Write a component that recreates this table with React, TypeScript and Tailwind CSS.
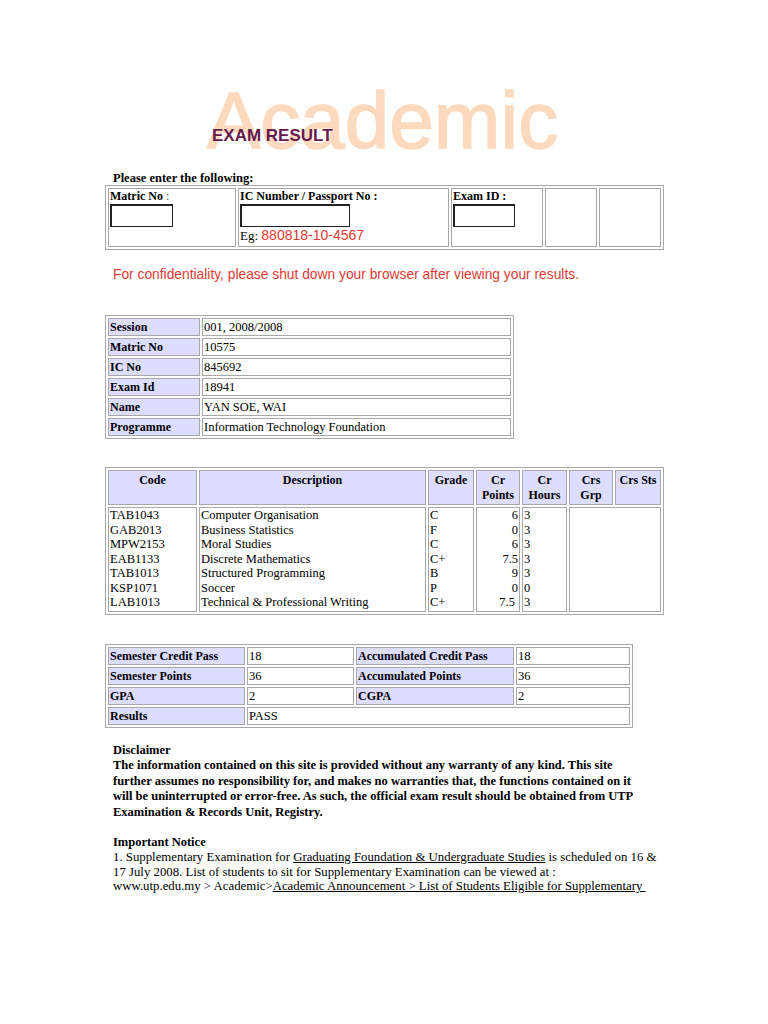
import React from "react";

const serif = "font-['Liberation_Serif','Times_New_Roman',serif]";
const sans = "font-['Liberation_Sans',Arial,sans-serif]";

// classic border=1 html table look
const table = "border-separate border-spacing-[2px] border border-[#a8a8a8] table-fixed";
const cell = "border border-[#a8a8a8] p-0 px-[1px]";
const label = `${cell} bg-[#ddddff] text-[12px] font-bold leading-[16px] h-[18px] align-middle`;
const value = `${cell} text-[12.5px] leading-[16px] h-[18px] align-middle`;

const info: [string, string][] = [
  ["Session", "001, 2008/2008"],
  ["Matric No", "10575"],
  ["IC No", "845692"],
  ["Exam Id", "18941"],
  ["Name", "YAN SOE, WAI"],
  ["Programme", "Information Technology Foundation"],
];

const courses = [
  { code: "TAB1043", desc: "Computer Organisation", grade: "C", pts: "6", hrs: "3" },
  { code: "GAB2013", desc: "Business Statistics", grade: "F", pts: "0", hrs: "3" },
  { code: "MPW2153", desc: "Moral Studies", grade: "C", pts: "6", hrs: "3" },
  { code: "EAB1133", desc: "Discrete Mathematics", grade: "C+", pts: "7.5", hrs: "3" },
  { code: "TAB1013", desc: "Structured Programming", grade: "B", pts: "9", hrs: "3" },
  { code: "KSP1071", desc: "Soccer", grade: "P", pts: "0", hrs: "0" },
  { code: "LAB1013", desc: "Technical & Professional Writing", grade: "C+", pts: "7.5\u00a0", hrs: "3" },
];

function Lines({ items }: { items: string[] }) {
  return (
    <>
      {items.map((t, i) => (
        <div key={i} className="whitespace-pre">
          {t}
        </div>
      ))}
    </>
  );
}

function Input({ w }: { w: string }) {
  return (
    <input
      type="text"
      aria-label="field"
      className={`block ${w} h-[23px] border border-[#222] border-t-2 border-l-2 bg-white outline-none`}
    />
  );
}

export default function App() {
  const head = `${cell} bg-[#ddddff] text-[12px] font-bold leading-[15px] text-center align-top pt-[2px] pb-[1px]`;
  const body = `${cell} text-[12.5px] leading-[14.5px] align-top pb-[1px]`;

  return (
    <div className={`min-h-[1024px] bg-white pl-[105px] pt-[81px] text-black ${serif}`}>
      {/* titre : filigrane + libellé */}
      <div className="relative h-[80px]">
        <div
          className={`ml-[102px] text-[80px] leading-[80px] text-[#fdd9bd] [-webkit-text-stroke:1.5px_#fdd9bd] ${sans}`}
        >
          Academic
        </div>
        <div className={`absolute left-[107px] top-[46px] text-[17px] font-bold leading-[17px] text-[#661a4d] ${sans}`}>
          EXAM RESULT
        </div>
      </div>

      <div className="ml-[8px] mt-[10px] text-[12.5px] font-bold leading-[14px]">Please enter the following:</div>

      <table className={`${table} w-[559px]`}>
        <tbody>
          <tr className="align-top">
            <td className={`${cell} w-[128px] text-[12px] leading-[15px] align-top`}>
              <b>Matric No</b> <span className="text-[#555]">:</span>
              <Input w="w-[63px]" />
            </td>
            <td className={`${cell} w-[211px] text-[12px] leading-[15px] align-top`}>
              <b>IC Number / Passport No :</b>
              <Input w="w-[110px]" />
              <div className="pb-[2px] text-[13px] leading-[16px]">
                Eg: <span className={`text-[14px] text-[#e23a34] ${sans}`}>880818-10-4567</span>
              </div>
            </td>
            <td className={`${cell} w-[92px] text-[12px] leading-[15px] align-top`}>
              <b>Exam ID :</b>
              <Input w="w-[62px]" />
            </td>
            <td className={`${cell} w-[52px]`} />
            <td className={`${cell} w-[62px]`} />
          </tr>
        </tbody>
      </table>

      <p className={`ml-[8px] mt-[17px] text-[13.8px] leading-[16px] text-[#e23a34] ${sans}`}>
        For confidentiality, please shut down your browser after viewing your results.
      </p>

      <table className={`${table} mt-[32px] w-[409px]`}>
        <tbody>
          {info.map(([k, v], i) => (
            <tr key={k}>
              <td className={`${label} ${i === 0 ? "w-[92px]" : ""}`}>{k}</td>
              <td className={`${value} ${i === 0 ? "w-[309px]" : ""}`}>{v}</td>
            </tr>
          ))}
        </tbody>
      </table>

      <table className={`${table} mt-[28px] w-[559px]`}>
        <tbody>
          <tr>
            <td className={`${head} w-[89px]`}>Code</td>
            <td className={`${head} w-[227px]`}>Description</td>
            <td className={`${head} w-[46px]`}>Grade</td>
            <td className={`${head} w-[44px]`}>
              Cr
              <br />
              Points
            </td>
            <td className={`${head} w-[45px]`}>
              Cr
              <br />
              Hours
            </td>
            <td className={`${head} w-[44px]`}>
              Crs
              <br />
              Grp
            </td>
            <td className={`${head} w-[46px]`}>Crs Sts</td>
          </tr>
          <tr>
            <td className={body}>
              <Lines items={courses.map((c) => c.code)} />
            </td>
            <td className={body}>
              <Lines items={courses.map((c) => c.desc)} />
            </td>
            <td className={body}>
              <Lines items={courses.map((c) => c.grade)} />
            </td>
            <td className={`${body} text-right`}>
              <Lines items={courses.map((c) => c.pts)} />
            </td>
            <td className={body}>
              <Lines items={courses.map((c) => c.hrs)} />
            </td>
            <td className={body} colSpan={2} />
          </tr>
        </tbody>
      </table>

      <table className={`${table} mt-[29px] w-[528px]`}>
        <tbody>
          <tr>
            <td className={`${label} w-[137px]`}>Semester Credit Pass</td>
            <td className={`${value} w-[107px]`}>18</td>
            <td className={`${label} w-[158px]`}>Accumulated Credit Pass</td>
            <td className={`${value} w-[114px]`}>18</td>
          </tr>
          <tr>
            <td className={label}>Semester Points</td>
            <td className={value}>36</td>
            <td className={label}>Accumulated Points</td>
            <td className={value}>36</td>
          </tr>
          <tr>
            <td className={label}>GPA</td>
            <td className={value}>2</td>
            <td className={label}>CGPA</td>
            <td className={value}>2</td>
          </tr>
          <tr>
            <td className={label}>Results</td>
            <td className={value} colSpan={3}>
              PASS
            </td>
          </tr>
        </tbody>
      </table>

      <div className="ml-[8px] mt-[15px] whitespace-nowrap text-[12.5px] font-bold leading-[15.5px]">
        <div>Disclaimer</div>
        <div>The information contained on this site is provided without any warranty of any kind. This site</div>
        <div>further assumes no responsibility for, and makes no warranties that, the functions contained on it</div>
        <div>will be uninterrupted or error-free. As such, the official exam result should be obtained from UTP</div>
        <div>Examination &amp; Records Unit, Registry.</div>
      </div>

      <div className="ml-[8px] mt-[15px] whitespace-nowrap text-[12.8px] leading-[14.8px]">
        <div className="text-[12.5px] font-bold">Important Notice</div>
        <div>
          1. Supplementary Examination for{" "}
          <span className="underline">Graduating Foundation &amp; Undergraduate Studies</span> is scheduled on 16 &amp;
        </div>
        <div>17 July 2008. List of students to sit for Supplementary Examination can be viewed at :</div>
        <div>
          www.utp.edu.my &gt; Academic&gt;
          <span className="underline">Academic Announcement &gt; List of Students Eligible for Supplementary&nbsp;</span>
        </div>
      </div>
    </div>
  );
}
